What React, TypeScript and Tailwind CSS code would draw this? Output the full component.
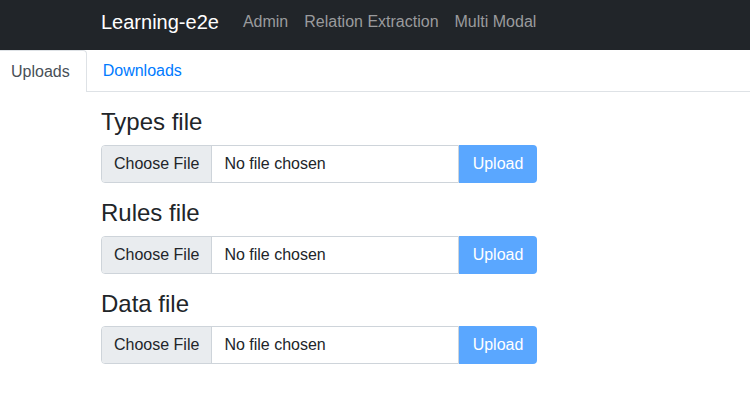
import React from "react";

const files = ["Types file", "Rules file", "Data file"];

function FileRow({ label }: { label: string }) {
  return (
    <div className="mb-4">
      <h4 className="mb-2 text-[24px] font-medium leading-[1.2] text-[#212529]">{label}</h4>
      <div className="flex h-[38px] w-[436px] text-[16px]">
        <div className="flex flex-1 overflow-hidden rounded-l-[4px] border border-[#ced4da]">
          <span className="flex items-center border-r border-[#ced4da] bg-[#e9ecef] px-3 text-[#212529]">
            Choose File
          </span>
          <span className="flex items-center bg-white px-3 text-[#212529]">No file chosen</span>
        </div>
        <button className="w-[78px] rounded-r-[4px] bg-[#5aa7ff] text-white">Upload</button>
      </div>
    </div>
  );
}

export default function App() {
  return (
    <div className="min-h-[419px] bg-white font-['Liberation_Sans',Arial,sans-serif] text-[#212529]">
      <nav className="flex h-[50px] items-center bg-[#212529] pb-[6px] pl-[101px]">
        <span className="mr-6 text-[20px] text-white">Learning-e2e</span>
        <div className="flex gap-4 text-[16px] text-[#9a9b9d]">
          <span>Admin</span>
          <span>Relation Extraction</span>
          <span>Multi Modal</span>
        </div>
      </nav>
      <div className="flex h-[42px] border-b border-[#dee2e6]">
        <div className="-mb-px flex items-center rounded-tr-[4px] border-r border-t border-[#dee2e6] bg-white pl-[11px] pr-4 text-[16px] text-[#495057]">
          Uploads
        </div>
        <div className="flex items-center px-4 text-[16px] text-[#007bff]">Downloads</div>
      </div>
      <div className="pl-[101px] pt-4">
        {files.map((f) => (
          <FileRow key={f} label={f} />
        ))}
      </div>
    </div>
  );
}
